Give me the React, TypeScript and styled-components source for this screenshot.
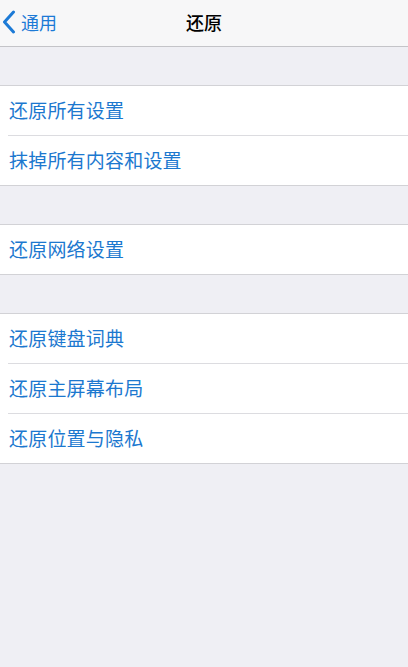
import styled, { createGlobalStyle } from 'styled-components';

const GlobalStyle = createGlobalStyle`
    html, body {
        margin: 0;
        padding: 0;
        background: #efeff4;
    }
    body {
        font-family: "Noto Sans CJK SC", "Noto Sans", sans-serif;
    }
    * {
        box-sizing: border-box;
    }
`

const Page = styled.div`
    width: 408px;
    min-height: 667px;
    background: #efeff4;
`

const NavBar = styled.header`
    position: relative;
    display: flex;
    align-items: center;
    justify-content: center;
    height: 47px;
    padding-bottom: 3px;
    background: #f7f7f8;
    border-bottom: 1px solid #c4c4c8;
`

const BackButton = styled.div`
    position: absolute;
    left: 2px;
    top: 0;
    bottom: 0;
    display: flex;
    align-items: center;
    gap: 5px;
    padding-bottom: 3px;
    color: #1c7ad6;
    font-size: 18px;
`

const Title = styled.h1`
    margin: 0;
    font-size: 18px;
    font-weight: 500;
    color: #000;
`

const Group = styled.ul`
    list-style: none;
    margin: 38px 0 0;
    padding: 0;
    background: #fff;
    border-top: 1px solid #d2d2d6;
    border-bottom: 1px solid #d2d2d6;
`

const Row = styled.li`
    display: flex;
    align-items: center;
    height: 49px;
    padding: 0 0 3px 9px;
    color: #1c78cf;
    font-size: 19px;
    letter-spacing: 0.2px;

    & + & {
        height: 50px;
        border-top: 1px solid #dcdce0;
        margin-left: 8px;
        padding-left: 1px;
    }
`

const groups = [
    ['还原所有设置', '抹掉所有内容和设置'],
    ['还原网络设置'],
    ['还原键盘词典', '还原主屏幕布局', '还原位置与隐私'],
]

const Chevron = () => (
    <svg width="14" height="24" viewBox="0 0 14 24" fill="none">
        <path d="M11.5 2 L2.5 12 L11.5 22" stroke="#1c7ad6" strokeWidth="3" strokeLinecap="round" strokeLinejoin="round" />
    </svg>
)

export default function App() {
    return (
        <Page>
            <GlobalStyle />
            <NavBar>
                <BackButton>
                    <Chevron />
                    <span>通用</span>
                </BackButton>
                <Title>还原</Title>
            </NavBar>
            {groups.map((items, i) => (
                <Group key={i}>
                    {items.map(label => (
                        <Row key={label}>{label}</Row>
                    ))}
                </Group>
            ))}
        </Page>
    )
}
